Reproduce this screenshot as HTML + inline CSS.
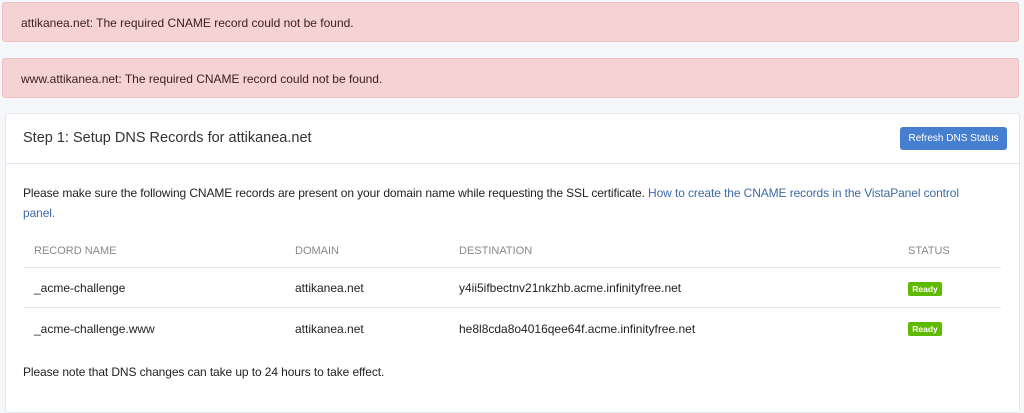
<!DOCTYPE html>
<html><head><meta charset="utf-8"><style>
body{margin:0;width:1024px;height:402px;overflow:hidden;background:#f5f7fb;font-family:"Liberation Sans",sans-serif;color:#222;font-size:12px}
.alert{position:absolute;left:2px;width:1017px;height:40px;background:#f5d3d4;border:1px solid #eec2c4;border-radius:3px;box-sizing:border-box;color:#3a1e1e;line-height:40px;padding-left:18px;font-size:12px}
.card{position:absolute;left:5px;top:113px;width:1015px;height:300px;background:#fff;border:1px solid #e3e6ea;border-radius:3px;box-sizing:border-box}
.hd{height:49px;border-bottom:1px solid #e6e8eb;position:relative}
.hd h3{margin:0;position:absolute;left:17px;top:16px;font-weight:normal;font-size:14.5px;color:#333}
.btn{position:absolute;left:894px;top:13px;width:107px;height:23px;background:#467fcf;border-radius:3px;color:#fff;font-size:10px;line-height:23px;text-align:center}
p{margin:0;position:absolute;left:17px;line-height:20px;width:960px;font-size:12px;letter-spacing:-0.1px}
a{color:#3d6aa6;text-decoration:none}
.t{position:absolute;font-size:12px}
.th{color:#888;font-size:11px}
.line{position:absolute;left:18px;width:977px;height:1px;background:#e3e6ea}
.b{position:absolute;left:902px;width:34px;height:14px;background:#5eba00;color:#fff;font-size:8.5px;font-weight:bold;text-align:center;line-height:14px;border-radius:2px}
</style></head><body>
<div class="alert" style="top:2px">attikanea.net: The required CNAME record could not be found.</div>
<div class="alert" style="top:58px">www.attikanea.net: The required CNAME record could not be found.</div>
<div class="card">
<div class="hd"><h3>Step 1: Setup DNS Records for attikanea.net</h3><div class="btn">Refresh DNS Status</div></div>
<p style="top:69px">Please make sure the following CNAME records are present on your domain name while requesting the SSL certificate. <a>How to create the CNAME records in the VistaPanel control panel.</a></p>
<div class="t th" style="left:28px;top:131px">RECORD NAME</div>
<div class="t th" style="left:289px;top:131px">DOMAIN</div>
<div class="t th" style="left:453px;top:131px">DESTINATION</div>
<div class="t th" style="left:902px;top:131px">STATUS</div>
<div class="line" style="top:153px"></div>
<div class="t" style="left:28px;top:167px">_acme-challenge</div>
<div class="t" style="left:289px;top:167px">attikanea.net</div>
<div class="t" style="left:453px;top:167px">y4ii5ifbectnv21nkzhb.acme.infinityfree.net</div>
<div class="b" style="top:168px">Ready</div>
<div class="line" style="top:193px"></div>
<div class="t" style="left:28px;top:208px">_acme-challenge.www</div>
<div class="t" style="left:289px;top:208px">attikanea.net</div>
<div class="t" style="left:453px;top:208px">he8l8cda8o4016qee64f.acme.infinityfree.net</div>
<div class="b" style="top:208px">Ready</div>
<p style="top:248px">Please note that DNS changes can take up to 24 hours to take effect.</p>
</div>
</body></html>
